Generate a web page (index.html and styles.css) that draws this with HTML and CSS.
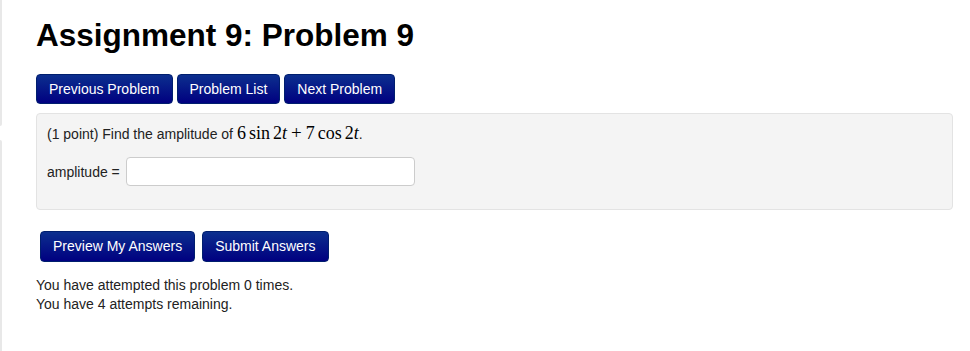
FILE: index.html
```html
<!DOCTYPE html>
<html>
<head>
<meta charset="utf-8">
<link rel="stylesheet" href="styles.css">
</head>
<body>
<div class="page">
  <div class="rail">
    <div class="rail-top"></div>
    <div class="rail-bottom"></div>
  </div>
  <main class="content">
    <h2 class="title">Assignment 9: Problem 9</h2>
    <nav class="nav-buttons">
      <a class="btn">Previous Problem</a>
      <a class="btn">Problem List</a>
      <a class="btn">Next Problem</a>
    </nav>
    <div class="problem">
      <p class="statement">(1 point) Find the amplitude of <span class="math"><span class="mn">6</span><span class="fn">sin</span><span class="mn">2</span><span class="mi">t</span><span class="op">+</span><span class="mn">7</span><span class="fn">cos</span><span class="mn">2</span><span class="mi">t</span></span>.</p>
      <div class="answer-row">
        <label class="answer-label">amplitude =</label>
        <input class="answer-input" type="text">
      </div>
    </div>
    <div class="submit-buttons">
      <a class="btn btn-lg">Preview My Answers</a>
      <a class="btn btn-lg">Submit Answers</a>
    </div>
    <div class="attempts">
      <div>You have attempted this problem 0 times.</div>
      <div>You have 4 attempts remaining.</div>
    </div>
  </main>
</div>
</body>
</html>
```

FILE: styles.css
```css
html, body {
  margin: 0;
  padding: 0;
  background: #fff;
}
body {
  font-family: "Liberation Sans", Arial, sans-serif;
  font-size: 14px;
  line-height: 20px;
  color: #333;
}
.page {
  display: flex;
  min-height: 351px;
}
.rail {
  width: 2px;
  display: flex;
  flex-direction: column;
  gap: 14px;
}
.rail-top {
  height: 126px;
  border-right: 2px solid #e8e8e8;
  border-bottom-right-radius: 3px;
}
.rail-bottom {
  flex: 1;
  border-right: 2px solid #e8e8e8;
  border-top-right-radius: 3px;
}
.content {
  flex: 1;
  margin-left: 34px;
  margin-right: 17px;
}
.title {
  font-family: "Liberation Sans", Arial, sans-serif;
  font-size: 31.5px;
  line-height: 40px;
  font-weight: bold;
  color: #000;
  margin: 15px 0 19px 0;
}
.nav-buttons {
  display: flex;
  gap: 4px;
}
.btn {
  display: inline-block;
  box-sizing: border-box;
  height: 30px;
  padding: 0 12px;
  line-height: 28px;
  font-size: 14px;
  color: #fff;
  text-decoration: none;
  background: linear-gradient(to bottom, #0c2f8e 0%, #000080 100%);
  border: 1px solid #001e6e;
  border-radius: 4px;
  white-space: nowrap;
}
.problem {
  margin-top: 9px;
  background: #f4f4f4;
  border: 1px solid #e3e3e3;
  border-radius: 4px;
  padding: 9px 10px 23px 10px;
}
.statement {
  margin: 0 0 13px 0;
  color: #222;
}
.math {
  font-family: "Liberation Serif", "Times New Roman", serif;
  font-size: 18px;
  color: #000;
}
.fn { margin-left: 3px; margin-right: 3px; }
.mi { font-style: italic; }
.op { margin: 0 4px; font-size: 19px; }
.answer-row {
  display: flex;
  align-items: center;
  gap: 6px;
}
.answer-label {
  color: #222;
}
.answer-input {
  box-sizing: border-box;
  width: 289px;
  height: 29px;
  border: 1px solid #ccc;
  border-radius: 4px;
  background: #fff;
  margin: 0;
}
.submit-buttons {
  display: flex;
  gap: 7px;
  margin: 21px 0 0 4px;
}
.btn-lg {
  height: 31px;
  padding: 0 12px;
  line-height: 29px;
}
.attempts {
  margin-top: 14px;
  line-height: 19px;
  color: #222;
}
```
